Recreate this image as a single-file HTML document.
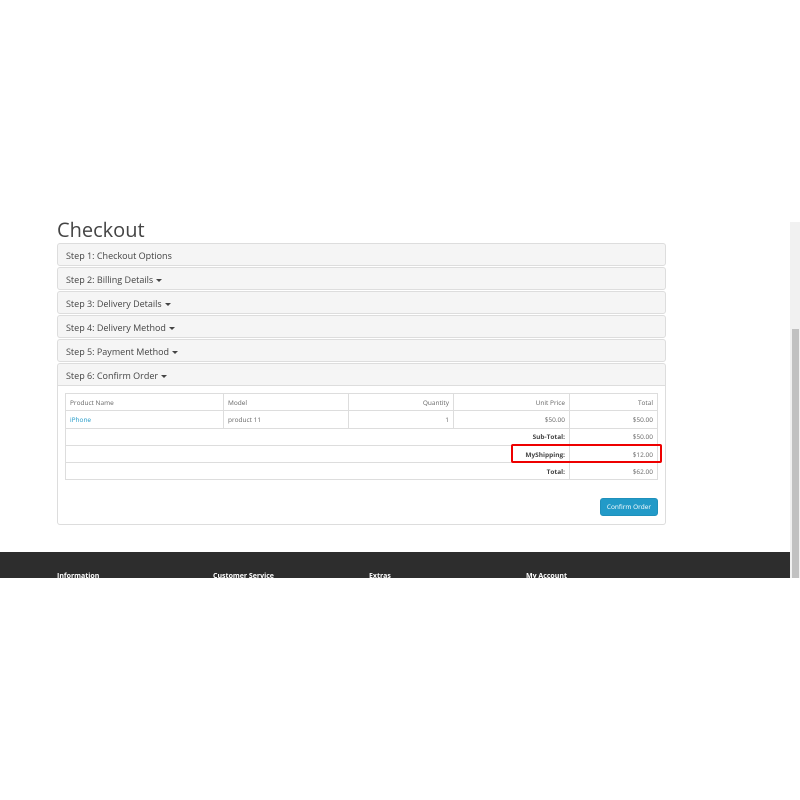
<!DOCTYPE html><html><head><style>
*{box-sizing:border-box;margin:0;padding:0}
body{width:800px;height:800px;background:#fff;position:relative;font-family:"Open Sans","Liberation Sans",sans-serif;color:#444;overflow:hidden}
h1{position:absolute;left:57px;top:216px;font-size:20px;font-weight:normal;color:#444}
.p{position:absolute;left:57px;width:609px;height:23px;background:#f5f5f5;border:1px solid #ddd;border-radius:3px;font-size:9px;padding:5px 8px;color:#444}
.c{display:inline-block;border-left:3px solid transparent;border-right:3px solid transparent;border-top:3px solid #444;vertical-align:middle;margin-left:3px}
.body{position:absolute;left:57px;top:385px;width:609px;height:140px;border:1px solid #ddd;border-top:none;border-radius:0 0 3px 3px}
table{position:absolute;left:65px;top:393px;width:593px;border-collapse:collapse;font-size:6.5px;color:#666}
td{border:1px solid #ddd;height:17.3px;padding:0 4px}
.r{text-align:right}.b{font-weight:bold;color:#444}
.red{position:absolute;left:511px;top:444px;width:151px;height:19px;border:2px solid #e00;border-radius:2px}
.btn{position:absolute;left:600px;top:498px;width:58px;height:18px;background:#229ac8;border:1px solid #1f90bb;border-radius:3px;color:#fff;font-size:6.5px;text-align:center;line-height:16px}
.foot{position:absolute;left:0;top:552px;width:790px;height:26px;background:#2d2d2d;overflow:hidden}
.foot span{position:absolute;top:20px;font-size:7px;font-weight:bold;color:#fff}
.sb{position:absolute;left:790px;top:222px;width:10px;height:356px;background:#f1f1f1}
.th{position:absolute;left:792px;top:329px;width:7px;height:249px;background:#c1c1c1}
</style></head><body>
<h1>Checkout</h1>
<div class="p" style="top:243px">Step 1: Checkout Options</div>
<div class="p" style="top:267px">Step 2: Billing Details<span class="c"></span></div>
<div class="p" style="top:291px">Step 3: Delivery Details<span class="c"></span></div>
<div class="p" style="top:315px">Step 4: Delivery Method<span class="c"></span></div>
<div class="p" style="top:339px">Step 5: Payment Method<span class="c"></span></div>
<div class="p" style="top:363px;border-radius:3px 3px 0 0">Step 6: Confirm Order<span class="c"></span></div>
<div class="body"></div>
<table>
<tr><td style="width:158px">Product Name</td><td style="width:125px">Model</td><td class="r" style="width:105px">Quantity</td><td class="r" style="width:116px">Unit Price</td><td class="r">Total</td></tr>
<tr><td style="color:#229ac8">iPhone</td><td>product 11</td><td class="r">1</td><td class="r">$50.00</td><td class="r">$50.00</td></tr>
<tr><td colspan="4" class="r b">Sub-Total:</td><td class="r">$50.00</td></tr>
<tr><td colspan="4" class="r b">MyShipping:</td><td class="r">$12.00</td></tr>
<tr><td colspan="4" class="r b">Total:</td><td class="r">$62.00</td></tr>
</table>
<div class="red"></div>
<div class="btn">Confirm Order</div>
<div class="foot"><span style="left:57px">Information</span><span style="left:213px">Customer Service</span><span style="left:369px">Extras</span><span style="left:526px">My Account</span></div>
<div class="sb"></div><div class="th"></div>
</body></html>
